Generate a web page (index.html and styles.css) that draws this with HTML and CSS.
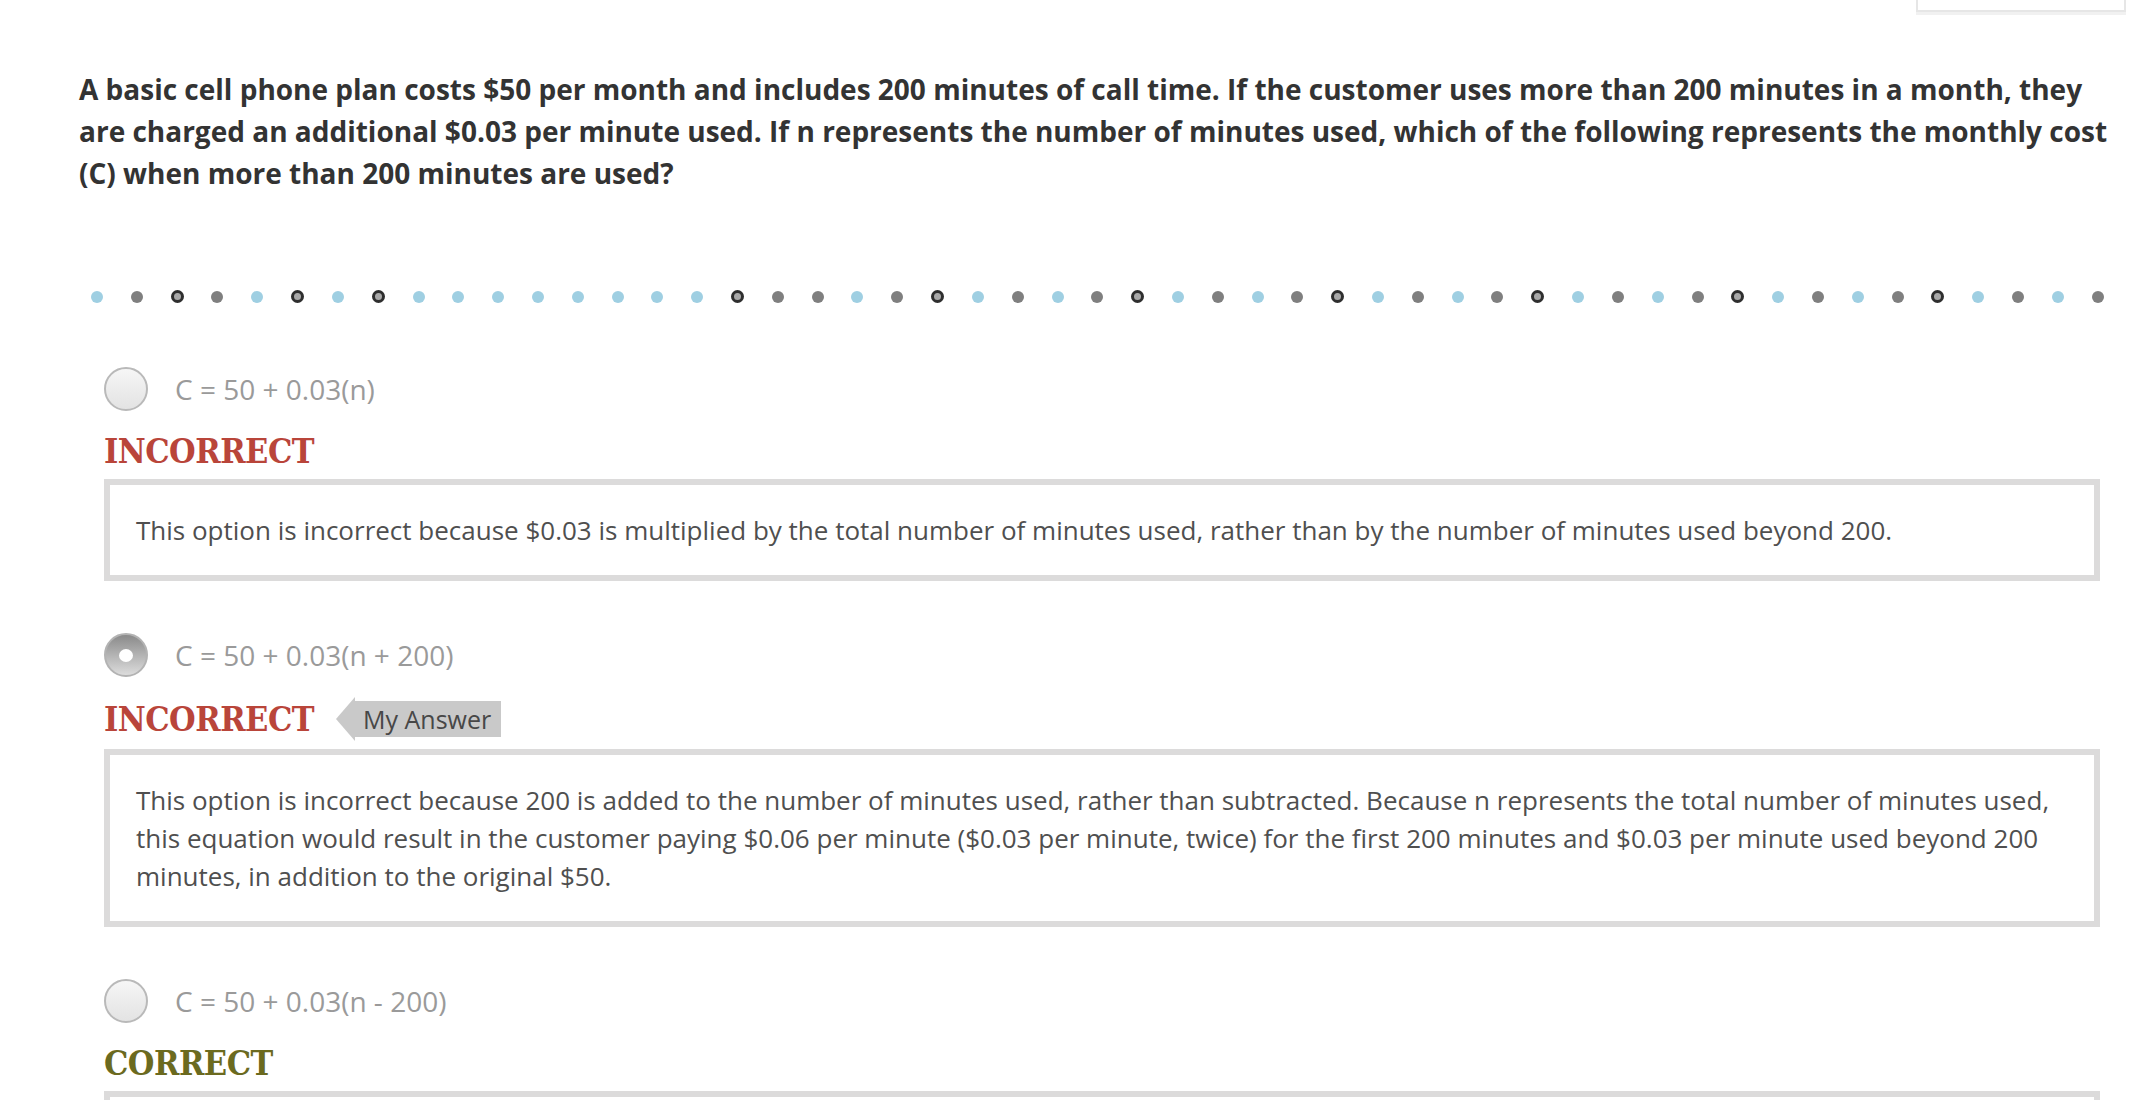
FILE: index.html
```html
<!DOCTYPE html>
<html lang="en">
<head>
<meta charset="utf-8">
<title>Question review</title>
<link rel="stylesheet" href="styles.css">
</head>
<body>
<div class="topbar"><div class="tab"></div></div>
<main class="page">
  <p class="question">A basic cell phone plan costs $50 per month and includes 200 minutes of call time. If the customer uses more than 200 minutes in a month, they are charged an additional $0.03 per minute used. If n represents the number of minutes used, which of the following represents the monthly cost (C) when more than 200 minutes are used?</p>

  <div class="dots">
    <span class="dot b"></span><span class="dot g"></span><span class="dot r"></span><span class="dot g"></span><span class="dot b"></span>
    <span class="dot r"></span><span class="dot b"></span><span class="dot r"></span><span class="dot b"></span><span class="dot b"></span>
    <span class="dot b"></span><span class="dot b"></span><span class="dot b"></span><span class="dot b"></span><span class="dot b"></span>
    <span class="dot b"></span><span class="dot r"></span><span class="dot g"></span><span class="dot g"></span><span class="dot b"></span>
    <span class="dot g"></span><span class="dot r"></span><span class="dot b"></span><span class="dot g"></span><span class="dot b"></span>
    <span class="dot g"></span><span class="dot r"></span><span class="dot b"></span><span class="dot g"></span><span class="dot b"></span>
    <span class="dot g"></span><span class="dot r"></span><span class="dot b"></span><span class="dot g"></span><span class="dot b"></span>
    <span class="dot g"></span><span class="dot r"></span><span class="dot b"></span><span class="dot g"></span><span class="dot b"></span>
    <span class="dot g"></span><span class="dot r"></span><span class="dot b"></span><span class="dot g"></span><span class="dot b"></span>
    <span class="dot g"></span><span class="dot r"></span><span class="dot b"></span><span class="dot g"></span><span class="dot b"></span>
    <span class="dot g"></span>
  </div>

  <div class="options">
    <section class="option">
      <div class="choice"><span class="radio"></span><span class="choice-text">C = 50 + 0.03(n)</span></div>
      <div class="verdict"><span class="verdict-label incorrect">INCORRECT</span></div>
      <div class="feedback"><p>This option is incorrect because $0.03 is multiplied by the total number of minutes used, rather than by the number of minutes used beyond 200.</p></div>
    </section>

    <section class="option">
      <div class="choice"><span class="radio checked"></span><span class="choice-text">C = 50 + 0.03(n + 200)</span></div>
      <div class="verdict">
        <span class="verdict-label incorrect">INCORRECT</span>
        <span class="tag">
          <svg class="tag-arrow" viewBox="0 0 19 48" preserveAspectRatio="none" aria-hidden="true"><polygon points="0,24 19,0 19,48" fill="#c9c9c9"/></svg>
          <span class="tag-body">My Answer</span>
        </span>
      </div>
      <div class="feedback"><p>This option is incorrect because 200 is added to the number of minutes used, rather than subtracted. Because n represents the total number of minutes used, this equation would result in the customer paying $0.06 per minute ($0.03 per minute, twice) for the first 200 minutes and $0.03 per minute used beyond 200 minutes, in addition to the original $50.</p></div>
    </section>

    <section class="option">
      <div class="choice"><span class="radio"></span><span class="choice-text">C = 50 + 0.03(n - 200)</span></div>
      <div class="verdict"><span class="verdict-label correct">CORRECT</span></div>
      <div class="feedback empty"></div>
    </section>
  </div>
</main>
</body>
</html>
```

FILE: styles.css
```css
html, body {
  margin: 0;
  padding: 0;
  background: #ffffff;
}

body {
  font-family: "Open Sans", "Liberation Sans", sans-serif;
}

.topbar {
  display: flex;
  justify-content: flex-end;
  padding-right: 28px;
  height: 15px;
}

.tab {
  width: 206px;
  height: 10px;
  background: #ffffff;
  border: 2px solid #e6e6e6;
  border-top: 0;
  box-shadow: 0 3px 0 #f1f1f1;
}

.page {
  padding: 0 28px 0 79px;
}

.question {
  margin: 53px 0 0;
  font-size: 28px;
  font-weight: 700;
  line-height: 42px;
  color: #333333;
}

.dots {
  display: flex;
  justify-content: space-between;
  align-items: center;
  height: 13px;
  margin: 96px 22px 0 12px;
}

.dot {
  display: block;
  width: 12px;
  height: 12px;
  border-radius: 50%;
  flex: none;
}

.dot.b {
  background: #9fcfe2;
}

.dot.g {
  background: #7f7f7f;
}

.dot.r {
  box-sizing: border-box;
  width: 13px;
  height: 13px;
  border: 3px solid #2e2e2e;
  background: #a9a9a9;
}

.options {
  margin: 64px 26px 0 25px;
}

.option + .option {
  margin-top: 52px;
}

.choice {
  display: flex;
  align-items: center;
  gap: 27px;
  height: 44px;
}

.radio {
  box-sizing: border-box;
  width: 44px;
  height: 44px;
  flex: none;
  border-radius: 50%;
  border: 2px solid #b9b9b9;
  background: linear-gradient(#f6f6f6, #e3e3e3);
  display: flex;
  align-items: center;
  justify-content: center;
}

.radio.checked {
  border-color: #b3b3b3;
  background: linear-gradient(#8a8a8a, #dcdcdc);
}

.radio.checked::after {
  content: "";
  width: 14px;
  height: 13px;
  border-radius: 50%;
  background: #ffffff;
}

.choice-text {
  font-size: 28px;
  color: #9a9a9a;
  line-height: 40px;
}

.verdict {
  display: flex;
  align-items: center;
  min-height: 40px;
  margin-top: 20px;
}

.verdict-label {
  font-family: "DejaVu Serif", "Liberation Serif", serif;
  font-stretch: condensed;
  font-weight: 700;
  font-size: 34px;
  line-height: 40px;
  letter-spacing: -0.5px;
}

.incorrect {
  color: #b9453a;
}

.correct {
  color: #6b6a1f;
}

.tag {
  display: flex;
  align-items: center;
  height: 44px;
  margin-left: 22px;
}

.tag-arrow {
  display: block;
  width: 19px;
  height: 44px;
}

.tag-body {
  display: block;
  height: 36px;
  line-height: 36px;
  padding: 0 10px 0 8px;
  background: #c9c9c9;
  font-size: 25px;
  color: #474747;
}

.feedback {
  margin-top: 8px;
  border: 6px solid #dcdbdb;
  padding: 26px;
  font-size: 26px;
  line-height: 38px;
  color: #4f4f4f;
}

.feedback p {
  margin: 0;
}

.feedback.empty {
  height: 60px;
}
```
